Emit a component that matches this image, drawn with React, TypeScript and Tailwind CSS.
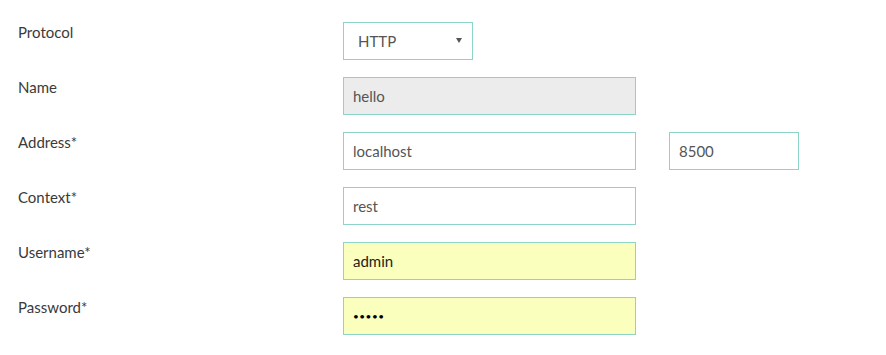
import React from 'react';

const box = 'h-[38px] border border-[#8dd3c8] px-[9px] outline-none';

function Row({ label, children }: { label: string; children: React.ReactNode }) {
  return (
    <div className="flex items-start h-[55px]">
      <label className="w-[343px] shrink-0 pl-[18px] text-[15px] leading-[20px] text-[#3a3a3a]">
        {label}
      </label>
      {children}
    </div>
  );
}

export default function App() {
  return (
    <div className="w-[886px] h-[355px] bg-white pt-[22px] font-['Lato','Liberation_Sans',Arial,sans-serif]">
      <Row label="Protocol">
        <div className="relative w-[130px] h-[38px] border border-[#8dd3c8] flex items-center pl-[14px] text-[15px] text-[#555]">
          HTTP
          <span className="absolute right-[10px] top-[15px] w-0 h-0 border-l-[3px] border-r-[3px] border-t-[5px] border-l-transparent border-r-transparent border-t-[#555]" />
        </div>
      </Row>
      <Row label="Name">
        <input readOnly value="hello" className={`${box} text-[15px] w-[293px] bg-[#ececec] text-[#555]`} />
      </Row>
      <Row label="Address*">
        <div className="flex gap-[33px]">
          <input readOnly value="localhost" className={`${box} text-[15px] w-[293px] bg-white text-[#555]`} />
          <input readOnly value="8500" className={`${box} text-[15px] w-[130px] bg-white text-[#555]`} />
        </div>
      </Row>
      <Row label="Context*">
        <input readOnly value="rest" className={`${box} text-[15px] w-[293px] bg-white text-[#555]`} />
      </Row>
      <Row label="Username*">
        <input readOnly value="admin" className={`${box} text-[15px] w-[293px] bg-[#faffbd] text-[#222]`} />
      </Row>
      <Row label="Password*">
        <input
          readOnly
          type="password"
          value="admin"
          className={`${box} text-[10px] w-[293px] bg-[#faffbd] text-black tracking-[0.5px]`}
        />
      </Row>
    </div>
  );
}
